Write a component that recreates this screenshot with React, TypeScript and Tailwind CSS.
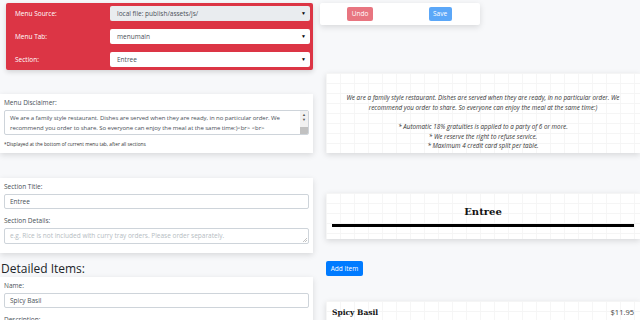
import React from "react";

const brick =
  "bg-white bg-[linear-gradient(#f5f5f5_1px,transparent_1px),linear-gradient(90deg,#f6f6f6_1px,transparent_1px)] bg-size-[14px_10px]";
const card = "bg-white shadow-[0_2px_6px_rgba(0,0,0,0.13)]";

function Select({ value, disabled }: { value: string; disabled?: boolean }) {
  return (
    <div
      className={`flex h-[15px] w-[200px] items-center justify-between rounded-[2px] pl-[7px] pr-[4px] text-[6.5px] text-[#495057] ${
        disabled ? "bg-[#e9ecef]" : "bg-white"
      }`}
    >
      <span>{value}</span>
      <span className="text-[5px] text-black">▼</span>
    </div>
  );
}

function Field({ value, muted }: { value: string; muted?: boolean }) {
  return (
    <div
      className={`flex h-[15px] items-center rounded-[2px] border border-[#ced4da] bg-white pl-[5px] text-[6.5px] ${
        muted ? "text-[#adb5bd]" : "text-[#495057]"
      }`}
    >
      {value}
    </div>
  );
}

function Grip() {
  return (
    <svg width="5" height="5" viewBox="0 0 5 5" className="absolute bottom-[1px] right-[1px]">
      <path d="M5 1 L1 5 M5 3 L3 5" stroke="#999" strokeWidth="0.6" />
    </svg>
  );
}

export default function App() {
  return (
    <div className="h-[320px] w-[640px] overflow-hidden bg-[#f7f8fa] font-['Open_Sans',sans-serif] text-[#212529]">
      {/* row 1 */}
      <div className="flex items-start gap-[7px] pt-[3px]">
        <div className="ml-[6px] flex w-[307px] flex-col gap-[8px] rounded-[2px] bg-[#dc3545] py-[3px] pl-[9px] shadow-[0_2px_5px_rgba(0,0,0,0.15)]">
          {[
            ["Menu Source:", "local file: publish/assets/js/", true],
            ["Menu Tab:", "menumain", false],
            ["Section:", "Entree", false],
          ].map(([label, value, disabled]) => (
            <div key={label as string} className="flex items-center">
              <span className="w-[95px] text-[6.5px] text-white">{label}</span>
              <Select value={value as string} disabled={disabled as boolean} />
            </div>
          ))}
        </div>
        <div className={`${card} grid h-[22px] w-[160px] grid-cols-2 items-center rounded-[2px]`}>
          <div className="flex justify-center">
            <button className="h-[14px] w-[26px] rounded-[2px] bg-[#e87580] text-[6.5px] text-white">Undo</button>
          </div>
          <div className="flex justify-center">
            <button className="h-[14px] w-[23px] rounded-[2px] bg-[#5ba7f8] text-[6.5px] text-white">Save</button>
          </div>
        </div>
      </div>

      {/* row 2 */}
      <div className="mt-[3px] flex items-end gap-[13px]">
        <div className={`${card} w-[313px] px-[4px] pb-[5px] pt-[4px]`}>
          <div className="text-[6.5px] leading-[9px] text-[#495057]">Menu Disclaimer:</div>
          <div className="relative mt-[3px] h-[25px] overflow-hidden rounded-[2px] border border-[#ced4da] bg-white pl-[5px] pr-[12px] pt-[2px] text-[6px] leading-[10px] tracking-[-0.05px] text-[#495057]">
            We are a family style restaurant. Dishes are served when they are ready, in no particular order. We recommend you order to share. So everyone can enjoy the meal at the same time:)&lt;br&gt; &lt;br&gt;
            <div className="absolute right-0 top-0 flex h-full w-[8px] flex-col items-center bg-[#f1f1f1] text-[4px] leading-[5px] text-[#555]">
              <span className="mt-[1px]">▲</span>
              <span>▼</span>
              <span className="mt-auto h-[7px] w-full bg-[#c1c1c1]" />
            </div>
          </div>
          <div className="mt-[6px] text-[4.8px] leading-[7px] text-[#333]">*Displayed at the bottom of current menu tab, after all sections</div>
        </div>
        <div className={`${brick} ${card} flex h-[80px] flex-1 flex-col items-center pt-[20px] text-center text-[6.3px] italic leading-[9.5px] text-[#333]`}>
          <p className="w-[290px]">
            We are a family style restaurant. Dishes are served when they are ready, in no particular order. We recommend you order to share. So everyone can enjoy the meal at the same time:)
          </p>
          <p className="mt-[10px]">* Automatic 18% gratuities is applied to a party of 6 or more.</p>
          <p>* We reserve the right to refuse service.</p>
          <p>* Maximum 4 credit card split per table.</p>
        </div>
      </div>

      {/* row 3 */}
      <div className="mt-[25px] flex items-center gap-[13px]">
        <div className={`${card} w-[313px] px-[4px] pb-[9px] pt-[4px]`}>
          <div className="text-[6.5px] leading-[9px] text-[#495057]">Section Title:</div>
          <div className="mt-[3px]">
            <Field value="Entree" />
          </div>
          <div className="mt-[7px] text-[6.5px] leading-[9px] text-[#495057]">Section Details:</div>
          <div className="relative mt-[3px] flex h-[16px] items-center rounded-[2px] border border-[#ced4da] bg-white pl-[5px] text-[6.5px] text-[#b5bcc2]">
            e.g. Rice is not included with curry tray orders. Please order separately.
            <Grip />
          </div>
        </div>
        <div className={`${brick} ${card} flex h-[46px] flex-1 flex-col px-[6px] pt-[12px]`}>
          <div className="text-center font-['DejaVu_Serif',serif] text-[10px] font-bold leading-[14px] text-[#111]">Entree</div>
          <div className="mt-[5px] h-[3px] bg-black" />
        </div>
      </div>

      {/* row 4 */}
      <div className="mt-[8px] flex items-start gap-[13px]">
        <div className="w-[313px]">
          <div className="pl-[1px] text-[12px] leading-[16px] text-[#212529]">Detailed Items:</div>
          <div className={`${card} px-[4px] pb-[10px] pt-[4px]`}>
            <div className="text-[6.5px] leading-[9px] text-[#495057]">Name:</div>
            <div className="mt-[3px]">
              <Field value="Spicy Basil" />
            </div>
            <div className="mt-[7px] text-[6.5px] leading-[9px] text-[#495057]">Description:</div>
          </div>
        </div>
        <div className="flex flex-1 flex-col items-start">
          <button className="h-[15px] w-[37px] rounded-[2px] bg-[#007bff] text-[6.5px] text-white">Add Item</button>
          <div className={`${brick} ${card} mt-[25px] flex h-[30px] w-full items-start justify-between px-[6px] pt-[6px]`}>
            <span className="font-['DejaVu_Serif',serif] text-[7.5px] font-bold text-[#111]">Spicy Basil</span>
            <span className="text-[7.5px] text-[#444]">$11.95</span>
          </div>
        </div>
      </div>
    </div>
  );
}
